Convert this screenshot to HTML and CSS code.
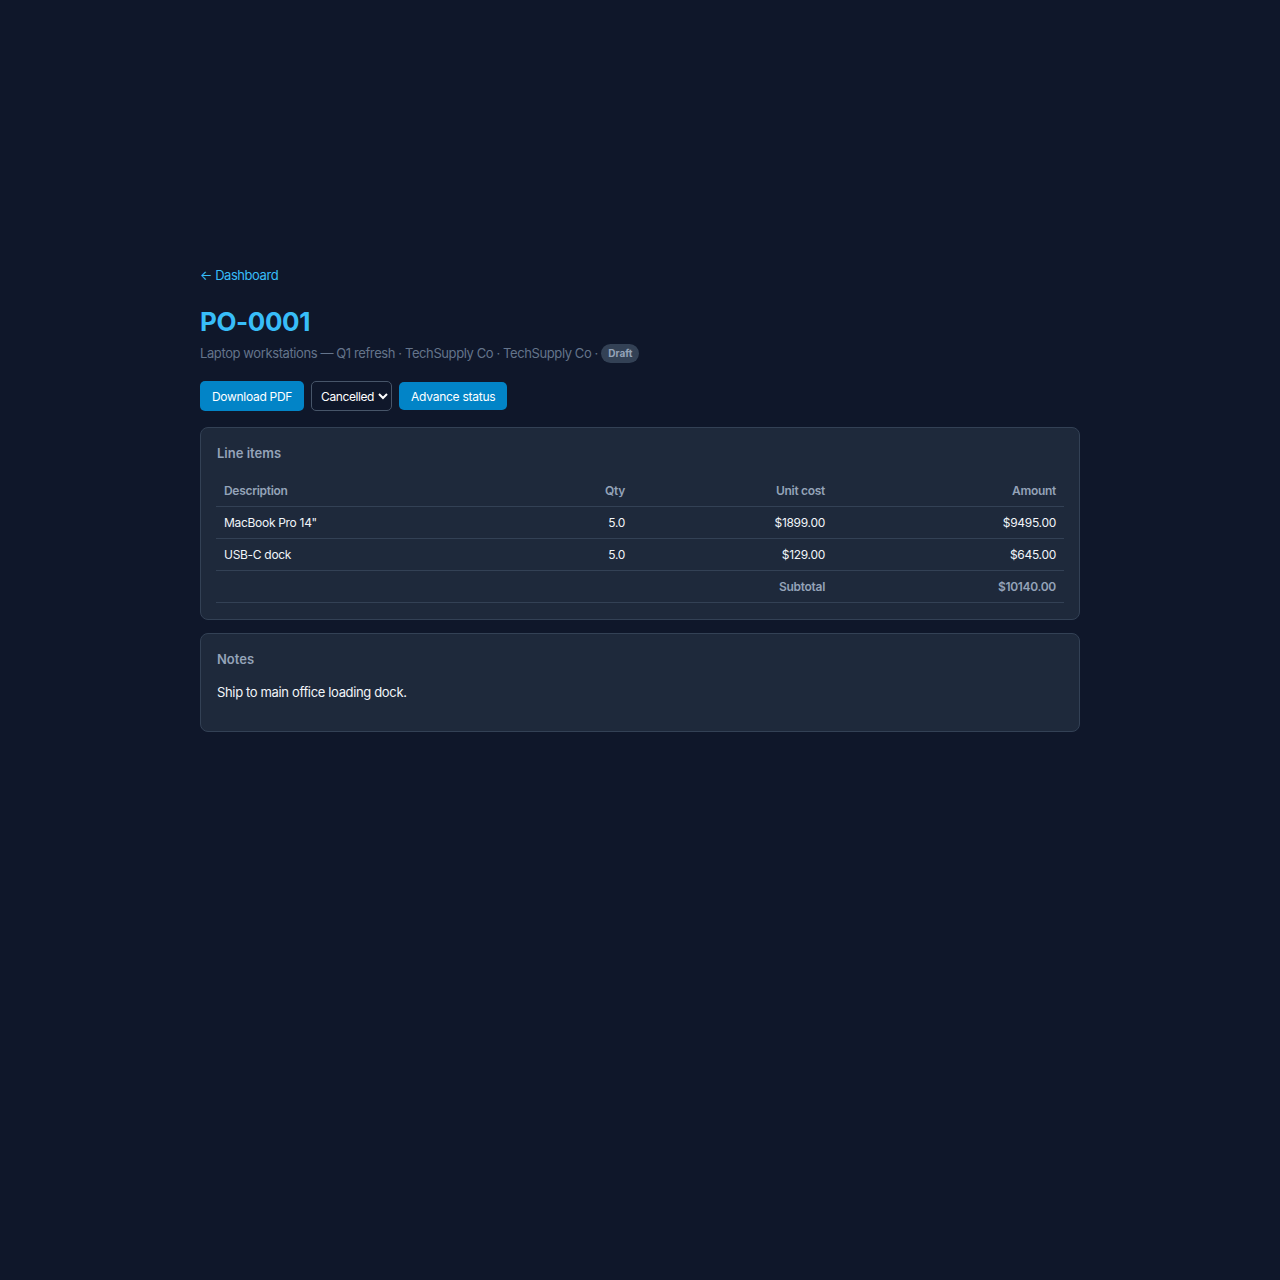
FILE: index.html
```html
<!DOCTYPE html>
<html lang="en">
<head>
<meta charset="utf-8">
<title>PO-0001</title>
<link rel="stylesheet" href="styles.css">
</head>
<body>
<main class="page">
  <a class="back" href="#">&larr; Dashboard</a>
  <h1 class="title">PO-0001</h1>
  <p class="subtitle">Laptop workstations — Q1 refresh · TechSupply Co · TechSupply Co · <span class="badge">Draft</span></p>
  <div class="actions">
    <button class="btn">Download PDF</button>
    <select class="select"><option>Cancelled</option></select>
    <button class="btn btn-sm">Advance status</button>
  </div>
  <section class="card">
    <h2 class="card-title">Line items</h2>
    <table class="items">
      <colgroup><col class="c-desc"><col class="c-qty"><col class="c-unit"><col class="c-amt"></colgroup>
      <thead>
        <tr><th class="l">Description</th><th>Qty</th><th>Unit cost</th><th>Amount</th></tr>
      </thead>
      <tbody>
        <tr><td class="l">MacBook Pro 14"</td><td>5.0</td><td>$1899.00</td><td>$9495.00</td></tr>
        <tr><td class="l">USB-C dock</td><td>5.0</td><td>$129.00</td><td>$645.00</td></tr>
        <tr class="total"><td></td><td></td><td>Subtotal</td><td>$10140.00</td></tr>
      </tbody>
    </table>
  </section>
  <section class="card notes">
    <h2 class="card-title">Notes</h2>
    <p class="note-text">Ship to main office loading dock.</p>
  </section>
</main>
</body>
</html>
```
FILE: styles.css
```css
* { box-sizing: border-box; }
html, body { margin: 0; background: #0f172a; }
body {
  font-family: Inter, "Noto Sans", "Liberation Sans", sans-serif;
  color: #e2e8f0;
  min-height: 1280px;
}
.page {
  width: 880px;
  margin: 0 auto;
  padding-top: 264px;
}
.back {
  display: inline-block;
  color: #38bdf8;
  text-decoration: none;
  font-size: 13px;
  line-height: 20px;
  letter-spacing: -0.45px;
}
.title {
  margin: 20px 0 0;
  font-size: 26px;
  line-height: 34px;
  font-weight: 700;
  color: #38bdf8;
  letter-spacing: -0.4px;
}
.subtitle {
  margin: 4px 0 0;
  font-size: 13px;
  line-height: 20px;
  color: #64748b;
  display: flex;
  align-items: center;
  white-space: pre;
  letter-spacing: -0.4px;
}
.badge {
  display: inline-block;
  background: #334155;
  color: #94a3b8;
  font-size: 10px;
  font-weight: 700;
  line-height: 19px;
  padding: 0 7px;
  border-radius: 10px;
  letter-spacing: 0;
}
.actions {
  display: flex;
  gap: 7px;
  align-items: center;
  margin-top: 18px;
}
.btn {
  font-family: inherit;
  font-size: 12px;
  letter-spacing: -0.3px;
  background: #0284c7;
  color: #fff;
  border: 0;
  border-radius: 5px;
  height: 30px;
  padding: 0 12px;
}
.btn-sm { height: 28px; padding: 0 12px; letter-spacing: -0.25px; }
.select {
  font-family: inherit;
  font-size: 12px;
  letter-spacing: -0.4px;
  height: 30px;
  padding: 0 0 0 5px;
  background: #0f172a;
  color: #fff;
  border: 1px solid #475569;
  border-radius: 5px;
  color-scheme: dark;
}
.card {
  margin-top: 16px;
  background: #1e293b;
  border: 1px solid #334155;
  border-radius: 8px;
  padding: 15px 15px 16px;
}
.notes { margin-top: 13px; padding-bottom: 29px; }
.card-title {
  margin: 0 0 12px;
  padding-left: 1px;
  font-size: 13px;
  line-height: 20px;
  font-weight: 600;
  color: #94a3b8;
}
.notes .card-title { margin-bottom: 13px; }
.items {
  width: 100%;
  border-collapse: collapse;
  font-size: 12px;
  letter-spacing: -0.3px;
}
.c-desc { width: 317px; }
.c-qty { width: 100px; }
.c-unit { width: 200px; }
.c-amt { width: 231px; }
.items th, .items td {
  height: 32px;
  padding: 0 8px;
  text-align: right;
  border-bottom: 1px solid #334155;
  vertical-align: middle;
}
.items thead th { height: 31px; }
.items th {
  color: #94a3b8;
  font-weight: 600;
}
.items .l { text-align: left; }
.items td { color: #f1f5f9; }
.items .total td { color: #94a3b8; font-weight: 600; }
.note-text {
  margin: 0;
  padding-left: 1px;
  font-size: 13px;
  line-height: 20px;
  color: #f1f5f9;
  letter-spacing: -0.35px;
}
```
